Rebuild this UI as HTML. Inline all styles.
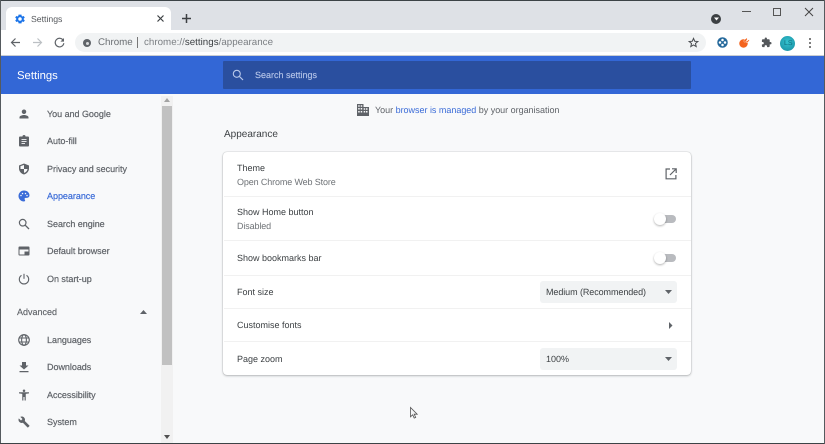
<!DOCTYPE html>
<html><head><meta charset="utf-8"><style>
*{box-sizing:border-box}
html,body{margin:0;padding:0;width:825px;height:444px;overflow:hidden;background:#f8f9fa;font-family:"Liberation Sans",sans-serif}
body{filter:blur(.25px);text-rendering:geometricPrecision}
.t{position:absolute;white-space:nowrap;line-height:12px;font-size:9px;color:#5f6368}
.b{position:absolute}
.nav{color:#5f6368;font-size:9px;left:47px;letter-spacing:-.03px;-webkit-text-stroke:.2px currentColor}
.d{color:#3c4043;left:237px}
.g{color:#6f7377;left:237px;letter-spacing:-.13px}
.sep{position:absolute;left:224px;width:467px;height:1px;background:#f1f1f1}
.sel{position:absolute;left:540px;width:137px;height:22px;background:#f1f3f4;border-radius:3px}
.tog{position:absolute;left:659px;width:17px;height:8px;border-radius:4px;background:#b9bbbf}
.knob{position:absolute;left:654px;width:12px;height:12px;border-radius:50%;background:#fff;box-shadow:0 1px 2px rgba(0,0,0,.3)}
svg{position:absolute;overflow:visible}
</style></head><body>
<div class="b" style="left:0;top:1px;width:825px;height:29px;background:#dee1e6"></div>
<div class="b" style="left:6px;top:7px;width:165px;height:24px;background:#fff;border-radius:6px 6px 0 0"></div>
<svg style="left:14px;top:13px" width="12" height="12" viewBox="0 0 24 24"><path fill="#1a73e8" d="M19.4 13a7.500 7.500 0 0 0 0-2l2.100-1.600-2-3.400-2.500 1a7.500 7.500 0 0 0-1.700-1L15 3.300H9l-.4 2.700a7.500 7.500 0 0 0-1.700 1l-2.500-1-2 3.400L4.600 11a7.500 7.500 0 0 0 0 2l-2.100 1.600 2 3.400 2.500-1a7.500 7.500 0 0 0 1.700 1L9 20.700h6l.4-2.700a7.500 7.500 0 0 0 1.700-1l2.500 1 2-3.400zM12 15.500a3.500 3.500 0 1 1 0-7 3.500 3.500 0 0 1 0 7z"/></svg>
<div class="t" style="left:31px;top:13px;font-size:8.700px;color:#55585c">Settings</div>
<svg style="left:156px;top:14px" width="9" height="9" viewBox="0 0 9 9"><path d="M1.500 1.500l6 6M7.500 1.500l-6 6" stroke="#3c4043" stroke-width="1.200"/></svg>
<svg style="left:181px;top:13px" width="11" height="11" viewBox="0 0 11 11"><path d="M5.500 1v9M1 5.500h9" stroke="#3c4043" stroke-width="1.500"/></svg>
<div class="b" style="left:711px;top:14px;width:10px;height:10px;border-radius:50%;background:#3c4043"></div>
<svg style="left:713.500px;top:17px" width="5" height="5" viewBox="0 0 5 5"><path d="M0 .5h5L2.500 3.500z" fill="#fff"/></svg>
<div class="b" style="left:742px;top:11px;width:9px;height:1px;background:#555"></div>
<div class="b" style="left:773px;top:8px;width:8px;height:8px;border:1px solid #555"></div>
<svg style="left:804px;top:7px" width="10" height="10" viewBox="0 0 10 10"><path d="M1 1l8 8M9 1l-8 8" stroke="#444" stroke-width="1"/></svg>
<div class="b" style="left:0;top:30px;width:825px;height:25px;background:#fff"></div>
<div class="b" style="left:0;top:55px;width:825px;height:1px;background:#c9cdd2"></div>
<svg style="left:10px;top:37px" width="11" height="11" viewBox="0 0 11 11"><path d="M10 5.500H2M5.500 1.500l-4 4 4 4" fill="none" stroke="#5f6368" stroke-width="1.200"/></svg>
<svg style="left:32px;top:37px" width="11" height="11" viewBox="0 0 11 11"><path d="M1 5.500h8M5.500 1.500l4 4-4 4" fill="none" stroke="#bcc0c4" stroke-width="1.200"/></svg>
<svg style="left:54px;top:37px" width="11" height="11" viewBox="0 0 11 11"><path d="M9.300 3.500A4.300 4.300 0 1 0 9.800 6.200" fill="none" stroke="#5f6368" stroke-width="1.200"/><path d="M10 1v3.600H6.400z" fill="#5f6368"/></svg>
<div class="b" style="left:75px;top:33px;width:631px;height:19px;border-radius:10px;background:#f1f3f4"></div>
<div class="b" style="left:83px;top:39px;width:8px;height:8px;border-radius:50%;background:#5f6368"></div>
<div class="b" style="left:85.500px;top:41.500px;width:3px;height:3px;border-radius:50%;background:#d8dadc"></div>
<div class="t" style="left:98px;top:37px;font-size:9.750px;color:#6a6e72">Chrome</div>
<div class="b" style="left:137px;top:37px;width:1px;height:11px;background:#777"></div>
<div class="t" style="left:144px;top:37px;font-size:9.750px;letter-spacing:.02px;color:#7a7e82">chrome://<span style="color:#3c4043">settings</span>/appearance</div>
<svg style="left:688px;top:37px" width="11" height="11" viewBox="0 0 24 24"><path d="M12 3l2.700 6.200 6.800.6-5.200 4.400 1.600 6.600L12 17.300l-5.900 3.500 1.600-6.600-5.200-4.400 6.800-.6z" fill="none" stroke="#4a4d51" stroke-width="2.200"/></svg>
<svg style="left:717px;top:37px" width="11" height="11" viewBox="0 0 22 22"><circle cx="11" cy="11" r="10.500" fill="#24689b"/><circle cx="11" cy="6" r="2.500" fill="#fff"/><circle cx="11" cy="16" r="2.500" fill="#fff"/><circle cx="6" cy="11" r="2.500" fill="#fff"/><circle cx="16" cy="11" r="2.500" fill="#fff"/></svg>
<svg style="left:739px;top:37px" width="11" height="11" viewBox="0 0 22 22"><circle cx="9" cy="13" r="8.500" fill="#f4641e"/><path d="M9 8l6-6 2 2-5 7zM14 10l6-5 1 2-5 5z" fill="#f4641e" stroke="#fff" stroke-width=".8"/></svg>
<svg style="left:761px;top:37px" width="11" height="11" viewBox="0 0 24 24"><path fill="#55585c" d="M20.500 11H19V7a2 2 0 0 0-2-2h-4V3.500a2.500 2.500 0 0 0-5 0V5H4a2 2 0 0 0-2 2v3.800h1.500a2.700 2.700 0 0 1 0 5.400H2V20a2 2 0 0 0 2 2h3.800v-1.500a2.700 2.700 0 0 1 5.400 0V22H17a2 2 0 0 0 2-2v-4h1.500a2.500 2.500 0 0 0 0-5z"/></svg>
<div class="b" style="left:780px;top:36px;width:15px;height:15px;border-radius:50%;background:radial-gradient(circle at 50% 40%,#35c3d0,#158a9e)"></div>
<div class="t" style="left:784px;top:38px;font-size:7px;color:#0f6d7d">LS</div>
<div class="b" style="left:809px;top:38px;width:2px;height:2px;background:#555;border-radius:50%;box-shadow:0 4px 0 #555,0 8px 0 #555"></div>
<div class="b" style="left:0;top:56px;width:825px;height:38px;background:#3367d6"></div>
<div class="t" style="left:17px;top:69.500px;font-size:11.300px;color:#fff">Settings</div>
<div class="b" style="left:223px;top:61px;width:468px;height:28px;background:#2a4f9f;border-radius:1px"></div>
<svg style="left:232px;top:69px" width="12" height="12" viewBox="0 0 12 12"><circle cx="4.800" cy="4.800" r="3.500" fill="none" stroke="#b8c8ea" stroke-width="1.100"/><path d="M7.500 7.500l3.500 3.500" stroke="#b8c8ea" stroke-width="1.200"/></svg>
<div class="t" style="left:255px;top:69px;font-size:9px;color:#b4c4e8;-webkit-text-stroke:.15px currentColor">Search settings</div>
<div class="b" style="left:161px;top:96px;width:12px;height:348px;background:#f1f1f1"></div>
<div class="b" style="left:162px;top:106px;width:10px;height:259px;background:#c1c1c1"></div>
<svg style="left:164px;top:98px" width="6" height="4"><path d="M0 4L3 0l3 4z" fill="#a3a3a3"/></svg>
<svg style="left:164px;top:435px" width="6" height="4"><path d="M0 0h6L3 4z" fill="#505050"/></svg>
<svg style="left:18px;top:108px" width="12" height="12" viewBox="0 0 24 24"><path fill="#5f6368" d="M12 12a4.500 4.500 0 1 0 0-9 4.500 4.500 0 0 0 0 9zm0 2c-3.300 0-9 1.700-9 4.500V21h18v-2.500c0-2.800-5.700-4.500-9-4.500z"/></svg>
<div class="t nav" style="top:108px">You and Google</div>
<svg style="left:18px;top:135px" width="12" height="12" viewBox="0 0 24 24"><path fill="#5f6368" fill-rule="evenodd" d="M20 3h-5a3 3 0 0 0-6 0H4a2 2 0 0 0-2 2v16a2 2 0 0 0 2 2h16a2 2 0 0 0 2-2V5a2 2 0 0 0-2-2zM7 8h10v1.800H7zm0 4h10v1.800H7zm0 4h7v1.800H7z"/></svg>
<div class="t nav" style="top:135px">Auto-fill</div>
<svg style="left:18px;top:163px" width="12" height="12" viewBox="0 0 24 24"><path fill="#5f6368" d="M12 1L2 5v6c0 5.500 4.300 10.700 10 12 5.700-1.300 10-6.500 10-12V5zm0 3v8H5V6.300zm0 8h7c-.5 3.900-3.500 6.800-7 7.800z"/></svg>
<div class="t nav" style="top:163px">Privacy and security</div>
<svg style="left:18px;top:190px" width="12" height="12" viewBox="0 0 24 24"><path fill="#3b6cd8" d="M12 1a11 11 0 0 0 0 22c1.400 0 2.300-1 2.300-2.200 0-.6-.2-1-.6-1.500-.4-.4-.6-.9-.6-1.400 0-1.200 1-2.100 2.200-2.100H18a5 5 0 0 0 5-5C23 5 18 1 12 1zM6 12.500a1.500 1.500 0 1 1 0-3 1.500 1.500 0 0 1 0 3zm3-4a1.500 1.500 0 1 1 0-3 1.500 1.500 0 0 1 0 3zm6 0a1.500 1.500 0 1 1 0-3 1.500 1.500 0 0 1 0 3zm3 4a1.500 1.500 0 1 1 0-3 1.500 1.500 0 0 1 0 3z"/></svg>
<div class="t nav" style="top:190px;color:#3b6cd8">Appearance</div>
<svg style="left:18px;top:218px" width="12" height="12" viewBox="0 0 12 12"><circle cx="4.700" cy="4.700" r="3.300" fill="none" stroke="#5f6368" stroke-width="1.200"/><path d="M7.200 7.200l3.800 3.800" stroke="#5f6368" stroke-width="1.300"/></svg>
<div class="t nav" style="top:218px">Search engine</div>
<svg style="left:18px;top:245px" width="12" height="12" viewBox="0 0 24 24"><path fill="#5f6368" fill-rule="evenodd" d="M3 3h18a2 2 0 0 1 2 2v14a2 2 0 0 1-2 2H3a2 2 0 0 1-2-2V5a2 2 0 0 1 2-2zm0 6v10h10v-6h8V9z"/></svg>
<div class="t nav" style="top:245px">Default browser</div>
<svg style="left:18px;top:273px" width="12" height="12" viewBox="0 0 12 12"><path d="M6 .8v5" stroke="#5f6368" stroke-width="1.100"/><path d="M3.500 2.300a4.700 4.700 0 1 0 5 0" fill="none" stroke="#5f6368" stroke-width="1.100"/></svg>
<div class="t nav" style="top:273px">On start-up</div>
<div class="t" style="left:17px;top:306px;color:#5f6368;-webkit-text-stroke:.15px currentColor">Advanced</div>
<svg style="left:140px;top:310px" width="7" height="4"><path d="M0 4l3.500-4 3.500 4z" fill="#5f6368"/></svg>
<svg style="left:18px;top:334px" width="12" height="12" viewBox="0 0 12 12"><g fill="none" stroke="#5f6368" stroke-width="1.100"><circle cx="6" cy="6" r="5.300"/><ellipse cx="6" cy="6" rx="2.400" ry="5.300"/><path d="M1 4h10M1 8h10"/></g></svg>
<div class="t nav" style="top:334px">Languages</div>
<svg style="left:18px;top:361px" width="12" height="12" viewBox="0 0 12 12"><path d="M4 1h4v3.500h2.500L6 8.500 1.500 4.500H4zM1.500 10h9v1.200h-9z" fill="#5f6368"/></svg>
<div class="t nav" style="top:361px">Downloads</div>
<svg style="left:18px;top:389px" width="12" height="12" viewBox="0 0 24 24"><circle cx="12" cy="3.500" r="2.500" fill="#5f6368"/><path fill="#5f6368" d="M2 6.500h20v2.200l-6.500 1V23h-2.300v-7h-2.400v7H8.500V9.700L2 8.700z"/></svg>
<div class="t nav" style="top:389px">Accessibility</div>
<svg style="left:18px;top:416px" width="12" height="12" viewBox="0 0 24 24"><path fill="#5f6368" d="M22.700 19l-9.100-9.100c.9-2.300.4-5-1.500-6.900-2-2-5-2.400-7.400-1.300L9 6 6 9 1.600 4.700C.4 7.100.9 10.100 2.900 12.100c1.900 1.900 4.600 2.400 6.900 1.500l9.100 9.100c.4.400 1 .4 1.400 0l2.300-2.300c.5-.4.500-1.100.1-1.400z"/></svg>
<div class="t nav" style="top:416px">System</div>
<svg style="left:357px;top:104px" width="12" height="12" viewBox="0 0 12 12"><path fill="#5f6368" fill-rule="evenodd" d="M0 0h6.500v3H12v9H0zM1.200 1.200v1.500h1.500V1.200zm2.500 0v1.500h1.500V1.200zM1.200 4v1.500h1.500V4zm2.500 0v1.500h1.500V4zM1.200 7v1.500h1.500V7zm2.500 0v1.500h1.500V7zm3-2.700v1.500h1.500V4.300zm2.300 0v1.500h1.500V4.300zM6.700 7v1.500h1.500V7zm2.300 0v1.500h1.500V7z"/></svg>
<div class="t" style="left:375px;top:104px;color:#5f6368;letter-spacing:-.02px">Your <span style="color:#3b6cd8">browser is managed</span> by your organisation</div>
<div class="t" style="left:224px;top:129px;font-size:10px;color:#3c4043">Appearance</div>
<div class="b" style="left:223px;top:152px;width:468px;height:223px;background:#fff;border-radius:4px;box-shadow:0 0 1px rgba(60,64,67,.45),0 1px 2px rgba(60,64,67,.3)"></div>
<div class="t d" style="top:162px">Theme</div>
<div class="t g" style="top:176px">Open Chrome Web Store</div>
<svg style="left:665px;top:168px" width="12" height="12" viewBox="0 0 12 12"><path d="M5 1H1.100v9.800h9.800V7" fill="none" stroke="#5f6368" stroke-width="1.200"/><path d="M7 .8h4.200V5M11 1L5 7" fill="none" stroke="#5f6368" stroke-width="1.200"/></svg>
<div class="sep" style="top:196px"></div>
<div class="t d" style="top:206px">Show Home button</div>
<div class="t g" style="top:220px">Disabled</div>
<div class="tog" style="top:215px"></div><div class="knob" style="top:213px"></div>
<div class="sep" style="top:240px"></div>
<div class="t d" style="top:252px">Show bookmarks bar</div>
<div class="tog" style="top:254px"></div><div class="knob" style="top:252px"></div>
<div class="sep" style="top:275px"></div>
<div class="t d" style="top:286px">Font size</div>
<div class="sel" style="top:281px"></div>
<div class="t" style="left:546px;top:286px;color:#3c4043;letter-spacing:-.08px">Medium (Recommended)</div>
<svg style="left:665px;top:290px" width="8" height="4"><path d="M0 0h7L3.500 4z" fill="#5f6368"/></svg>
<div class="sep" style="top:308px"></div>
<div class="t d" style="top:319px">Customise fonts</div>
<svg style="left:669px;top:322px" width="4" height="7"><path d="M0 0l3.500 3.500L0 7z" fill="#5f6368"/></svg>
<div class="sep" style="top:341px"></div>
<div class="t d" style="top:353px">Page zoom</div>
<div class="sel" style="top:348px"></div>
<div class="t" style="left:546px;top:353px;color:#3c4043">100%</div>
<svg style="left:665px;top:357px" width="8" height="4"><path d="M0 0h7L3.500 4z" fill="#5f6368"/></svg>
<svg style="left:410px;top:407px" width="8" height="12" viewBox="0 0 8 12"><path d="M.5.500v9.300l2.200-2 1.500 3.300 1.500-.7-1.500-3.200h3z" fill="#f4f5f6" stroke="#555" stroke-width=".8"/></svg>
<div class="b" style="left:0;top:0;width:825px;height:1px;background:#3c4346"></div>
<div class="b" style="left:0;top:0;width:1px;height:444px;background:#555a5e"></div>
<div class="b" style="left:0;top:443px;width:825px;height:1px;background:#3c4346"></div>
<div class="b" style="left:824px;top:0;width:1px;height:444px;background:#555a5e"></div>
</body></html>
